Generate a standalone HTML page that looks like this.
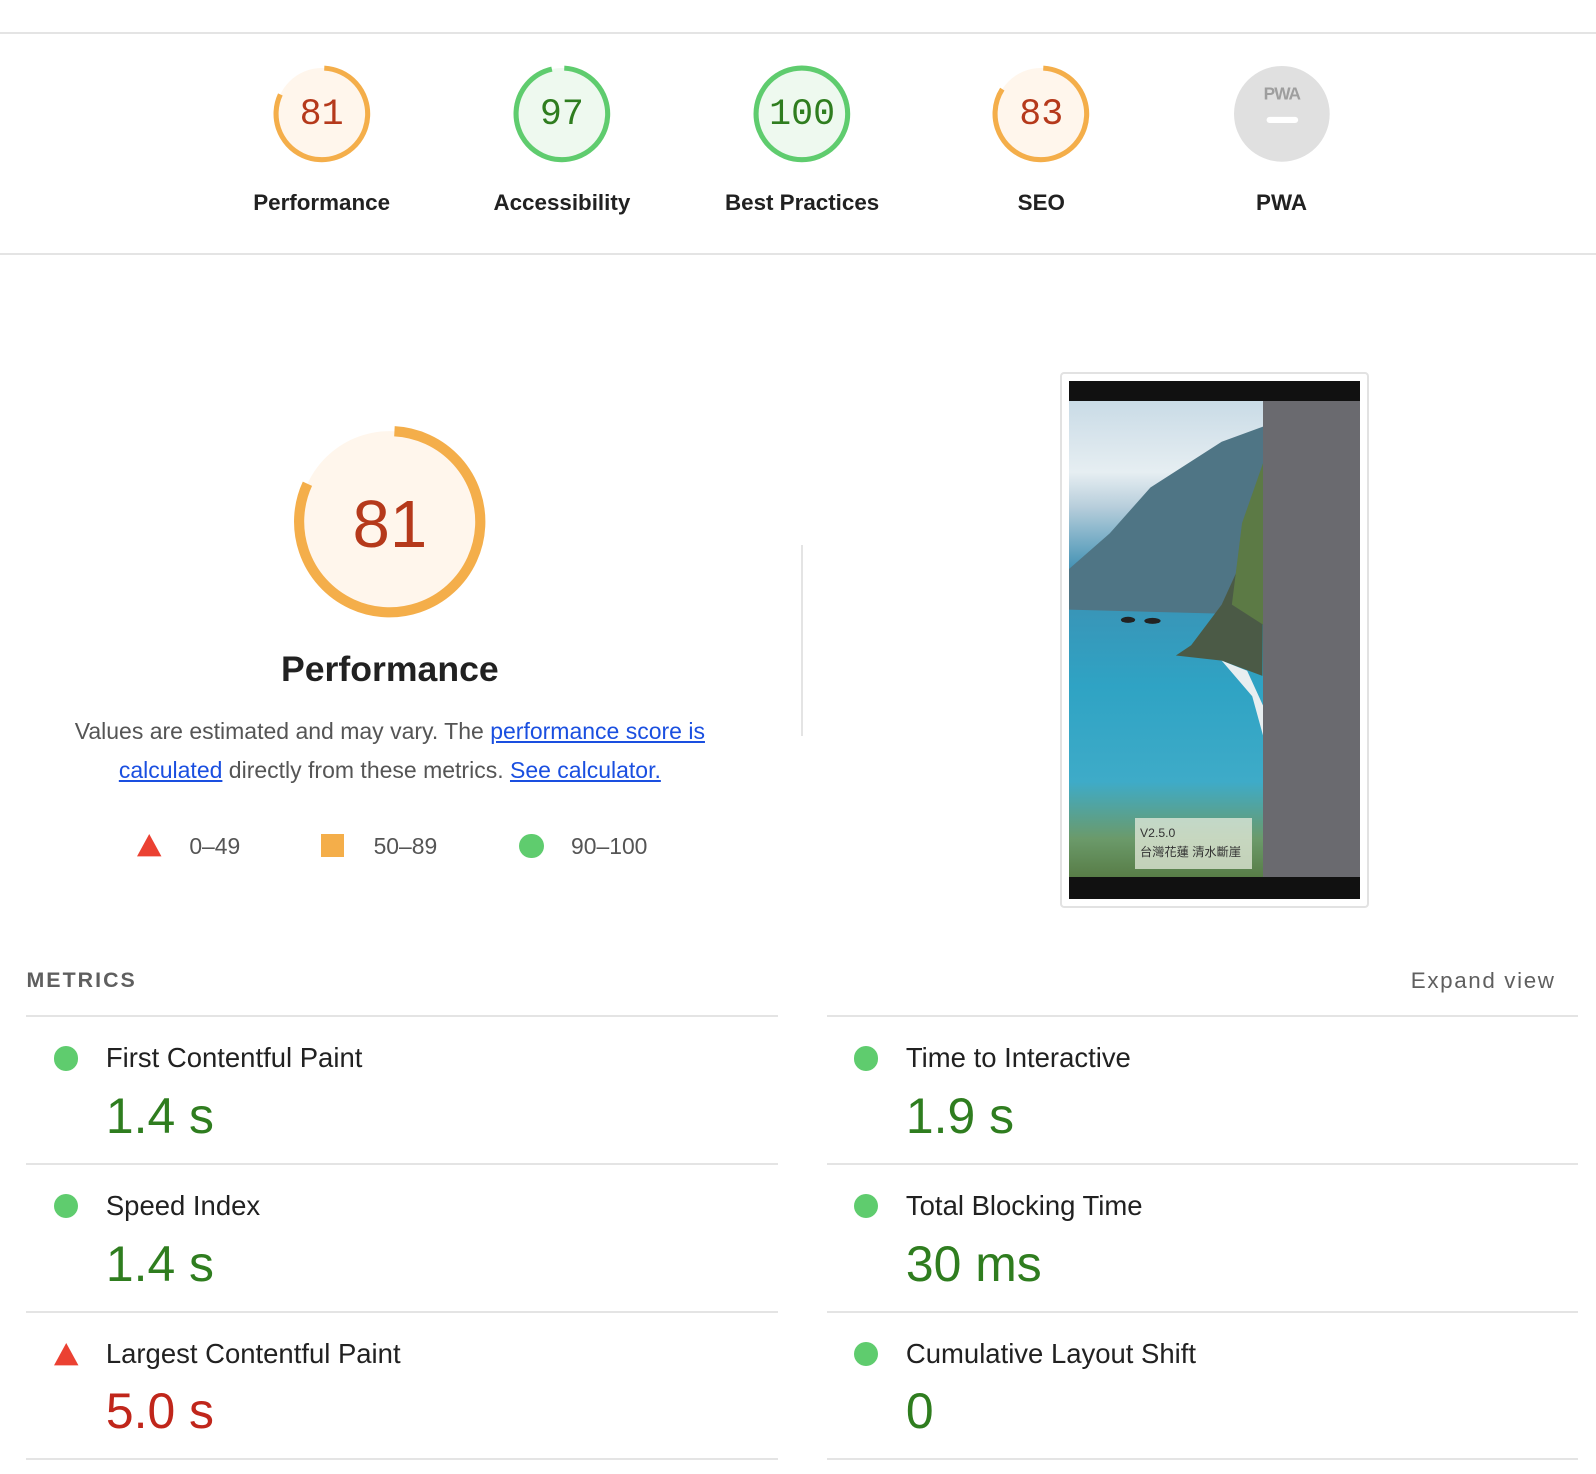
<!DOCTYPE html>
<html><head><meta charset="utf-8">
<style>
html,body{margin:0;padding:0;background:#fff;}
body{width:1596px;height:1474px;overflow:hidden;position:relative;font-family:"Liberation Sans",Arial,sans-serif;}
#w{position:absolute;left:0;top:0;width:1568px;height:1448px;zoom:1.0179;}
.a{position:absolute;}
.hl{position:absolute;height:2px;background:#e4e4e4;}
.lbl{position:absolute;width:240px;text-align:center;font-size:22px;font-weight:bold;color:#212121;top:187px;}
.g{position:absolute;top:64px;width:96px;height:96px;}
.gt{position:absolute;left:0;top:2px;width:96px;line-height:96px;text-align:center;font-family:"Liberation Mono",monospace;font-size:36px;}
.mt{position:absolute;font-size:27px;color:#212121;}
.mv{position:absolute;font-size:49px;}
.dot{position:absolute;width:24px;height:24px;border-radius:50%;background:#5fcc6e;}
.gr{color:#2f7d1f}.rd{color:#c0261b}
a{color:#1a4fe0;text-decoration:underline;}
</style></head><body><div id="w">
<div class="hl" style="left:0;top:31px;width:1568px"></div>
<div class="hl" style="left:0;top:249px;width:1568px"></div>

<div class="g" style="left:268px"><svg width="96" height="96"><circle cx="48" cy="48" r="45" fill="#fff6ec"/><circle cx="48" cy="48" r="45" fill="none" stroke="#f4ae4a" stroke-width="5" stroke-dasharray="229 300" transform="rotate(-87 48 48)"/></svg><div class="gt" style="color:#b5391b">81</div></div>
<div class="g" style="left:504px"><svg width="96" height="96"><circle cx="48" cy="48" r="45" fill="#eef9ef"/><circle cx="48" cy="48" r="45" fill="none" stroke="#5fcc6e" stroke-width="5" stroke-dasharray="270 300" transform="rotate(-87 48 48)"/></svg><div class="gt" style="color:#2f7d1f">97</div></div>
<div class="g" style="left:740px"><svg width="96" height="96"><circle cx="48" cy="48" r="45" fill="#eef9ef" stroke="#5fcc6e" stroke-width="5"/></svg><div class="gt" style="color:#2f7d1f">100</div></div>
<div class="g" style="left:975px"><svg width="96" height="96"><circle cx="48" cy="48" r="45" fill="#fff6ec"/><circle cx="48" cy="48" r="45" fill="none" stroke="#f4ae4a" stroke-width="5" stroke-dasharray="235 300" transform="rotate(-87 48 48)"/></svg><div class="gt" style="color:#b5391b">83</div></div>
<div class="g" style="left:1211px"><svg width="96" height="96"><circle cx="48" cy="48" r="47" fill="#e0e0e0"/><text x="48" y="34" text-anchor="middle" font-family="Liberation Sans" font-weight="bold" font-size="17" fill="#9e9e9e" letter-spacing="-1">PWA</text><rect x="33" y="51" width="31" height="6" rx="3" fill="#fff"/></svg></div>
<div class="lbl" style="left:196px">Performance</div>
<div class="lbl" style="left:432px">Accessibility</div>
<div class="lbl" style="left:668px">Best Practices</div>
<div class="lbl" style="left:903px">SEO</div>
<div class="lbl" style="left:1139px">PWA</div>

<div class="a" style="left:288px;top:418px"><svg width="190" height="190"><circle cx="95" cy="95" r="89" fill="#fff6ec"/><circle cx="95" cy="95" r="89" fill="none" stroke="#f4ae4a" stroke-width="10" stroke-dasharray="453 600" transform="rotate(-87 95 95)"/></svg></div>
<div class="a" style="left:288px;top:477px;width:190px;text-align:center;font-size:66px;color:#b5391b;font-family:'Liberation Sans',sans-serif">81</div>
<div class="a" style="left:183px;top:638px;width:400px;text-align:center;font-size:35px;font-weight:bold;color:#212121">Performance</div>
<div class="a" style="left:30px;top:699px;width:706px;text-align:center;font-size:22.6px;line-height:39px;color:#555">Values are estimated and may vary. The <a>performance score is calculated</a> directly from these metrics. <a>See calculator.</a></div>
<div class="a" style="left:134px;top:818px"><svg width="26" height="24"><polygon points="13,1 25,23 1,23" fill="#eb4132"/></svg></div>
<div class="a" style="left:186px;top:818px;font-size:22.5px;color:#555">0–49</div>
<div class="a" style="left:315px;top:819px;width:23px;height:23px;background:#f4ae4a"></div>
<div class="a" style="left:367px;top:818px;font-size:22.5px;color:#555">50–89</div>
<div class="dot" style="left:510px;top:819px"></div>
<div class="a" style="left:561px;top:818px;font-size:22.5px;color:#555">90–100</div>

<div class="a" style="left:787px;top:535px;width:2px;height:188px;background:#e4e4e4"></div>

<div class="a" style="left:1041px;top:365px;width:300px;height:523px;border:2px solid #e2e2e2;border-radius:4px"></div>
<div class="a" style="left:1050px;top:374px;width:286px;height:509px;background:#111"></div>
<div class="a" style="left:1241px;top:394px;width:95px;height:468px;background:#6a6a6f"></div>
<div class="a" style="left:1050px;top:394px;width:191px;height:468px;overflow:hidden;background:linear-gradient(180deg,#c9dbe6 0%,#e6eef2 15%,#b9cfdc 22%,#3d8fb2 36%,#2fa3c4 60%,#3eabc8 80%,#6b9a6a 92%,#587d47 100%)">
 <svg width="191" height="468" style="position:absolute;left:0;top:0"><polygon points="0,165 40,130 80,85 150,40 191,25 191,210 0,205" fill="#4f7585"/><polygon points="191,110 150,200 120,240 105,250 150,255 190,270" fill="#4b5a46"/><polygon points="191,60 170,120 160,200 191,220" fill="#5c7a45"/><ellipse cx="58" cy="215" rx="7" ry="3" fill="#222"/><ellipse cx="82" cy="216" rx="8" ry="3" fill="#222"/><polygon points="150,255 175,265 191,300 191,330 180,290" fill="#e8eef0"/></svg>
 <div class="a" style="left:65px;top:410px;width:115px;height:50px;background:rgba(230,235,220,.75);font-family:'Liberation Sans','Noto Sans CJK TC',sans-serif;font-size:12px;color:#333;padding:6px 0 0 5px;box-sizing:border-box;line-height:18px">V2.5.0<br>台灣花蓮 清水斷崖</div>
</div>

<div class="a" style="left:26px;top:951px;font-size:21px;font-weight:bold;letter-spacing:2px;color:#5f5f5f">METRICS</div>
<div class="a" style="left:1386px;top:951px;font-size:22px;letter-spacing:1.6px;color:#5f5f5f">Expand view</div>
<div class="hl" style="left:26px;top:997px;width:738px"></div><div class="hl" style="left:812px;top:997px;width:738px"></div>
<div class="hl" style="left:26px;top:1143px;width:738px"></div><div class="hl" style="left:812px;top:1143px;width:738px"></div>
<div class="hl" style="left:26px;top:1288px;width:738px"></div><div class="hl" style="left:812px;top:1288px;width:738px"></div>
<div class="hl" style="left:26px;top:1432px;width:738px"></div><div class="hl" style="left:812px;top:1432px;width:738px"></div>

<div class="dot" style="left:53px;top:1028px"></div><div class="mt" style="left:104px;top:1024px">First Contentful Paint</div><div class="mv gr" style="left:104px;top:1068px">1.4 s</div>
<div class="dot" style="left:53px;top:1173px"></div><div class="mt" style="left:104px;top:1169px">Speed Index</div><div class="mv gr" style="left:104px;top:1213px">1.4 s</div>
<div class="a" style="left:52px;top:1318px"><svg width="26" height="24"><polygon points="13,1 25,23 1,23" fill="#eb4132"/></svg></div><div class="mt" style="left:104px;top:1314px">Largest Contentful Paint</div><div class="mv rd" style="left:104px;top:1358px">5.0 s</div>

<div class="dot" style="left:839px;top:1028px"></div><div class="mt" style="left:890px;top:1024px">Time to Interactive</div><div class="mv gr" style="left:890px;top:1068px">1.9 s</div>
<div class="dot" style="left:839px;top:1173px"></div><div class="mt" style="left:890px;top:1169px">Total Blocking Time</div><div class="mv gr" style="left:890px;top:1213px">30 ms</div>
<div class="dot" style="left:839px;top:1318px"></div><div class="mt" style="left:890px;top:1314px">Cumulative Layout Shift</div><div class="mv gr" style="left:890px;top:1358px">0</div>
</div></body></html>
